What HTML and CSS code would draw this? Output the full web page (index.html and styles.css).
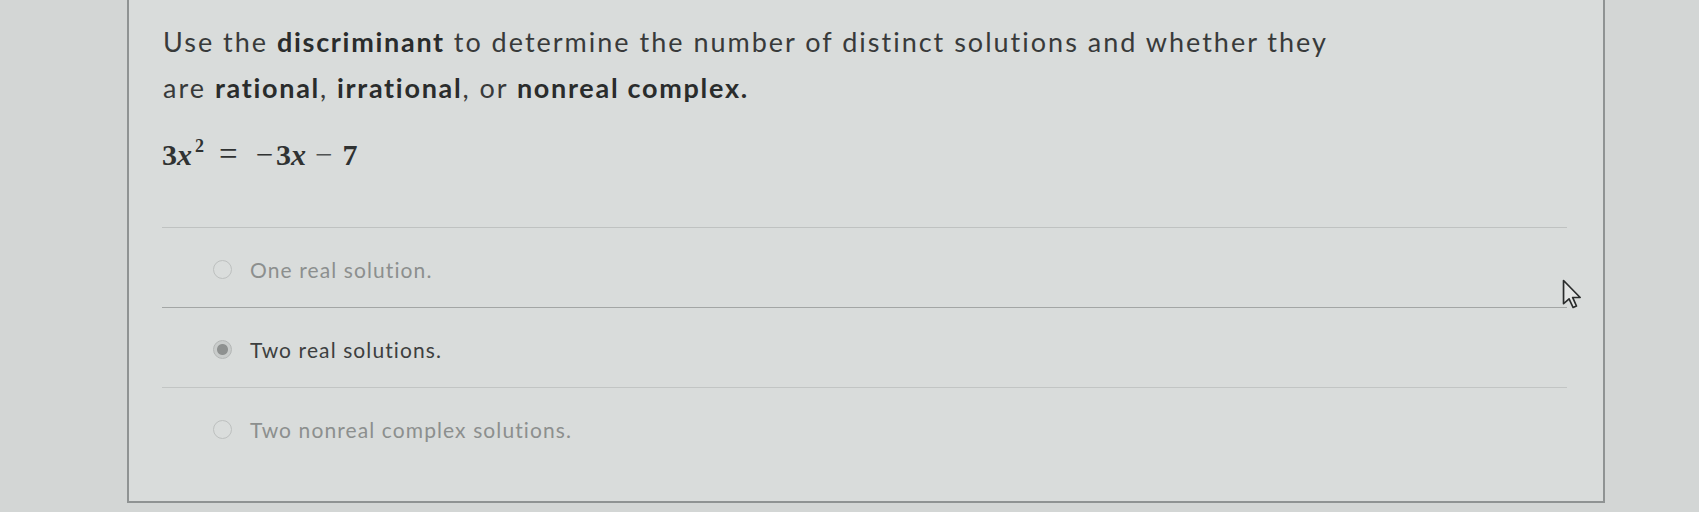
FILE: index.html
```html
<!DOCTYPE html>
<html lang="en">
<head>
<meta charset="utf-8">
<title>Discriminant question</title>
<link rel="stylesheet" href="styles.css">
</head>
<body>
<div class="page">
  <div class="card">
    <p class="prompt">Use the <b>discriminant</b> to determine the number of distinct solutions and whether they<br>are <b>rational</b>, <b>irrational</b>, or <b>nonreal complex.</b></p>
    <div class="equation"><span class="mn">3</span><span class="mi">x</span><sup class="sup">2</sup><span class="rel">=</span><span class="mo">−</span><span class="mn">3</span><span class="mi">x</span><span class="bin">−</span><span class="mn">7</span></div>
    <ul class="options">
      <li class="option faded"><span class="radio"></span><span class="label">One real solution.</span></li>
      <li class="option selected"><span class="radio"></span><span class="label">Two real solutions.</span></li>
      <li class="option faded"><span class="radio"></span><span class="label">Two nonreal complex solutions.</span></li>
    </ul>
  </div>
  <svg class="cursor" viewBox="0 0 13 20" preserveAspectRatio="none" aria-hidden="true">
    <path d="M1 1 L1 16.5 L4.6 13.2 L7.2 19 L9.4 18 L6.9 12.3 L11.8 12.3 Z" fill="#e4e6e5" stroke="#2a2c2c" stroke-width="1.1" stroke-linejoin="round"/>
  </svg>
</div>
</body>
</html>
```

FILE: styles.css
```css
html, body {
  margin: 0;
  padding: 0;
}

body {
  background: #d3d6d5;
  font-family: Lato, "Open Sans", "Liberation Sans", sans-serif;
  color: #373939;
  width: 1699px;
  height: 512px;
  overflow: hidden;
}

.page {
  position: relative;
  height: 512px;
}

.card {
  box-sizing: border-box;
  margin-left: 127px;
  width: 1478px;
  background: #d9dcdb;
  border: 2px solid #8f9393;
  border-top: none;
  padding: 19px 36px 34px 33px;
}

.prompt {
  margin: 0;
  font-size: 27px;
  line-height: 46px;
  letter-spacing: 2px;
  color: #383a3a;
  padding-left: 1px;
}

.prompt b {
  font-weight: 700;
  letter-spacing: 1.7px;
  color: #2a2c2c;
}

.equation {
  margin-top: 23px;
  height: 40px;
  line-height: 40px;
  font-family: "Liberation Serif", "DejaVu Serif", serif;
  font-size: 30px;
  color: #303232;
  display: flex;
  align-items: baseline;
}

.mn {
  font-weight: 700;
}

.mi {
  font-style: italic;
  font-weight: 700;
  letter-spacing: 1px;
}

.sup {
  font-size: 18px;
  font-weight: 700;
  line-height: 1;
  position: relative;
  top: -13px;
  margin-left: 2px;
}

.rel {
  margin: 0 18px 0 15px;
  font-size: 33px;
}

.mo {
  margin-right: 3px;
  font-size: 31px;
}

.bin {
  margin: 0 10px 0 8px;
  font-size: 31px;
  color: #505353;
}

.options {
  list-style: none;
  margin: 53px 0 0 0;
  padding: 0;
}

.option {
  height: 80px;
  box-sizing: border-box;
  border-top: 1px solid #bfc2c1;
  display: flex;
  align-items: center;
  padding-left: 51px;
  padding-top: 4px;
  font-size: 21px;
  letter-spacing: 1.1px;
}

.option.selected {
  border-top-color: #a3a6a5;
}

.option.selected + .option {
  border-top-color: #c2c5c4;
}

.radio {
  box-sizing: border-box;
  width: 19px;
  height: 19px;
  border-radius: 50%;
  border: 1.5px solid #bdc0bf;
  background: #dadddc;
  flex: none;
  margin-right: 18px;
}

.selected .radio {
  border-color: #b4b7b6;
  background: radial-gradient(circle, #8e9190 0 5px, #c9cccb 6px);
}

.label {
  color: #8c8f8e;
}

.selected .label {
  color: #3d3f3f;
}

.cursor {
  position: absolute;
  left: 1562px;
  top: 279px;
  width: 20px;
  height: 30px;
}
```
